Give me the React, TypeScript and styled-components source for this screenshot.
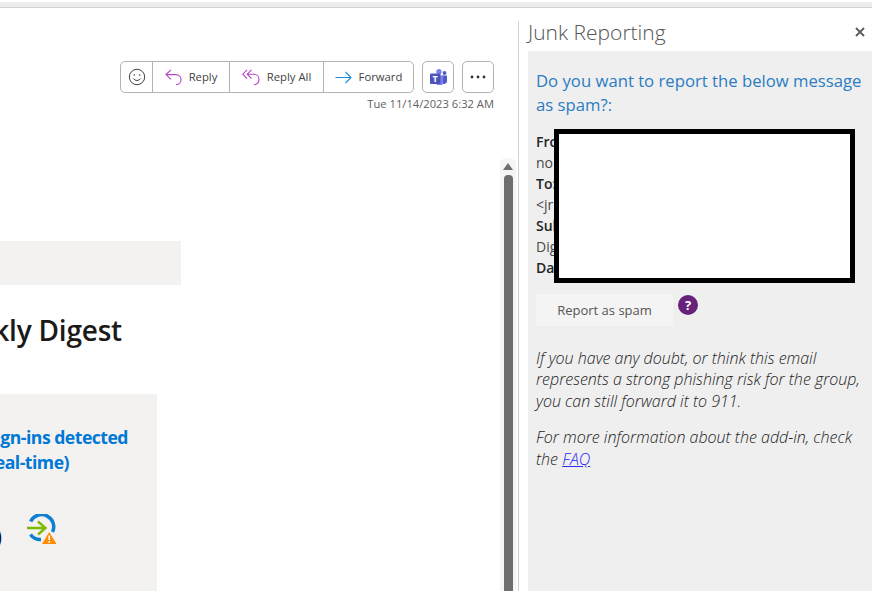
import React from 'react';
import styled, { createGlobalStyle } from 'styled-components';

const GlobalStyle = createGlobalStyle`
  html, body {
    margin: 0;
    padding: 0;
    background: #ffffff;
    font-family: "Open Sans", "Noto Sans", "Liberation Sans", sans-serif;
  }
`;

const Page = styled.div`
  width: 872px;
  height: 591px;
  overflow: hidden;
  display: flex;
  flex-direction: column;
`;

const TopStrip = styled.div`
  height: 5px;
  margin-top: 2px;
  background: #ececec;
  border-bottom: 1px solid #d2d2d2;
  flex: none;
`;

const Workspace = styled.div`
  flex: 1;
  min-height: 0;
  display: flex;
`;

const ReadingArea = styled.div`
  width: 518px;
  flex: none;
  display: flex;
`;

const MessageColumn = styled.div`
  width: 500px;
  flex: none;
  display: flex;
  flex-direction: column;
  overflow: hidden;
`;

const ActionRow = styled.div`
  display: flex;
  justify-content: flex-end;
  gap: 8px;
  padding: 53px 6px 0 0;
`;

const ActionGroup = styled.div`
  display: flex;
  height: 32px;
  box-sizing: border-box;
  border: 1px solid #b3b3b3;
  border-radius: 5px;
`;

const ActionButton = styled.div<{ $width: number }>`
  width: ${p => p.$width}px;
  box-sizing: border-box;
  display: flex;
  align-items: center;
  justify-content: center;
  gap: 7px;
  font-size: 11.3px;
  color: #424242;
  & + & {
    border-left: 1px solid #b3b3b3;
  }
  span {
    padding-bottom: 2px;
  }
`;

const SquareButton = styled.div`
  width: 32px;
  height: 32px;
  box-sizing: border-box;
  border: 1px solid #b3b3b3;
  border-radius: 5px;
  display: flex;
  align-items: center;
  justify-content: center;
`;

const Timestamp = styled.div`
  margin: 3px 6px 0 0;
  text-align: right;
  font-size: 11.2px;
  line-height: 16px;
  color: #616161;
`;

const BannerBand = styled.div`
  width: 181px;
  height: 44px;
  margin-top: 129px;
  background: #f3f2f1;
`;

const DigestTitle = styled.div`
  width: 122px;
  margin-top: 27px;
  display: flex;
  justify-content: flex-end;
  white-space: nowrap;
  font-size: 28px;
  line-height: 36px;
  font-weight: 600;
  letter-spacing: -0.2px;
  color: #1b1a19;
`;

const AlertCard = styled.div`
  width: 157px;
  flex: 1;
  margin-top: 46px;
  padding-top: 31px;
  background: #f3f2f1;
`;

const AlertLink = styled.div<{ $right: number }>`
  width: ${p => p.$right}px;
  display: flex;
  justify-content: flex-end;
  white-space: nowrap;
  font-size: 17.6px;
  line-height: 25px;
  font-weight: 700;
  letter-spacing: -0.5px;
  color: #0078d4;
`;

const AlertStatRow = styled.div`
  display: flex;
  align-items: flex-start;
  width: 57px;
  justify-content: flex-end;
  gap: 25px;
  margin-top: 39px;
  font-size: 24px;
  line-height: 32px;
  font-weight: 600;
  color: #111111;
  svg {
    flex: none;
  }
  span {
    flex: none;
    margin-top: 6px;
  }
`;

const ScrollTrack = styled.div`
  width: 16px;
  margin-top: 150px;
  flex: none;
  display: flex;
  flex-direction: column;
  align-items: center;
  background: #f5f5f5;
  border-radius: 6px 6px 0 0;
`;

const ScrollArrow = styled.div`
  width: 0;
  height: 0;
  margin-top: 5px;
  border-left: 5px solid transparent;
  border-right: 5px solid transparent;
  border-bottom: 7px solid #6e6e6e;
`;

const ScrollThumb = styled.div`
  width: 9px;
  flex: 1;
  margin-top: 5px;
  background: #6e6e6e;
  border-radius: 4px 4px 0 0;
`;

const PaneDivider = styled.div`
  width: 1px;
  margin-top: 13px;
  background: #d2d2d2;
  flex: none;
`;

const Pane = styled.div`
  flex: 1;
  min-width: 0;
  padding-left: 9px;
  display: flex;
  flex-direction: column;
`;

const PaneHeader = styled.div`
  height: 43px;
  flex: none;
  display: flex;
  align-items: flex-end;
  justify-content: space-between;
`;

const PaneTitle = styled.div`
  font-size: 21px;
  line-height: 34px;
  font-weight: 300;
  color: #555555;
  padding-bottom: 2px;
`;

const CloseButton = styled.div`
  width: 24px;
  height: 34px;
  margin-bottom: 2px;
  display: flex;
  align-items: center;
  justify-content: center;
`;

const PaneBody = styled.div`
  flex: 1;
  padding: 18px 8px 0;
  background: #efefef;
`;

const Question = styled.div`
  font-size: 16.7px;
  line-height: 24px;
  color: #2b7cc4;
`;

const MetaBlock = styled.div`
  position: relative;
  margin-top: 14px;
  height: 152px;
  font-size: 14px;
  line-height: 21px;
  color: #4a4a4a;
`;

const MetaLabel = styled.div`
  font-weight: 600;
  color: #252525;
`;

const Redaction = styled.div`
  position: absolute;
  left: 18px;
  top: -2px;
  width: 301px;
  height: 154px;
  box-sizing: border-box;
  background: #ffffff;
  border: 5px solid #000000;
`;

const ReportRow = styled.div`
  display: flex;
  align-items: flex-start;
  gap: 5px;
  margin-top: 11px;
`;

const ReportButton = styled.div`
  width: 137px;
  height: 32px;
  background: #f4f4f4;
  display: flex;
  align-items: center;
  justify-content: center;
  font-size: 13px;
  color: #555555;
`;

const HelpBadge = styled.div`
  width: 20px;
  height: 20px;
  margin-top: 1px;
  border-radius: 50%;
  background: #68217a;
  color: #ffffff;
  font-size: 13px;
  font-weight: 700;
  display: flex;
  align-items: center;
  justify-content: center;
`;

const Note = styled.p`
  margin: 0 0 15px;
  font-size: 16px;
  line-height: 21.4px;
  font-style: italic;
  font-weight: 300;
  color: #222222;
  &:first-of-type {
    margin-top: 22px;
  }
  a {
    color: #2a2af0;
  }
`;

const ReplyIcon = () => (
  <svg width="17" height="17" viewBox="0 0 17 17" fill="none" stroke="#b146c2" strokeWidth="1.1">
    <path d="M6 .8 1 5.6l5 4.8M1 5.6h9.500c3.600 0 5.500 2.400 5.500 5 0 2.800-2 5.200-5 5.200" />
  </svg>
);

const ReplyAllIcon = () => (
  <svg width="18" height="17" viewBox="0 0 18 17" fill="none" stroke="#b146c2" strokeWidth="1.1">
    <path d="M5 .8.8 5.200 5 9.600M9.500.8 5.200 5.200l4.300 4.400M5.200 5.200h6.300c3.600 0 5.500 2.600 5.500 5.200 0 2.900-2 5.400-5 5.400" />
  </svg>
);

const ForwardIcon = () => (
  <svg width="17" height="13" viewBox="0 0 17 13" fill="none" stroke="#1c8ad6" strokeWidth="1.1">
    <path d="M.5 6.500h15.500M10.500 1l5.500 5.500-5.500 5.500" />
  </svg>
);

const SmileIcon = () => (
  <svg width="18" height="18" viewBox="0 0 18 18" fill="none" stroke="#424242" strokeWidth="1">
    <circle cx="9" cy="9" r="7.700" />
    <circle cx="6.300" cy="7" r=".8" fill="#424242" stroke="none" />
    <circle cx="11.700" cy="7" r=".8" fill="#424242" stroke="none" />
    <path d="M5.500 10.800c1.800 2.300 5.200 2.300 7 0" strokeLinecap="round" />
  </svg>
);

const TeamsIcon = () => (
  <svg width="17" height="16" viewBox="0 0 17 16">
    <circle cx="9" cy="2.800" r="2.700" fill="#7b83eb" />
    <circle cx="14.500" cy="4" r="1.900" fill="#5059c9" />
    <path d="M11.500 6.500H17v5a3 3 0 0 1-5.500 2z" fill="#5059c9" />
    <path d="M5 6.500h8v6.500a3.400 3.400 0 0 1-7 .5z" fill="#7b83eb" />
    <rect x="0" y="4.500" width="10.500" height="10.500" rx="1" fill="#4b53bc" />
    <text x="5.200" y="12.700" textAnchor="middle" fontSize="9" fontWeight="700" fill="#ffffff" fontFamily="'Open Sans', sans-serif">T</text>
  </svg>
);

const MoreIcon = () => (
  <svg width="16" height="4" viewBox="0 0 16 4" fill="#333333">
    <circle cx="2" cy="2" r="1.400" />
    <circle cx="8" cy="2" r="1.400" />
    <circle cx="14" cy="2" r="1.400" />
  </svg>
);

const CloseIcon = () => (
  <svg width="10" height="10" viewBox="0 0 10 10" fill="none" stroke="#5a5a5a" strokeWidth="1.800">
    <path d="M1 1l8 8M9 1l-8 8" />
  </svg>
);

const SignInAlertIcon = () => (
  <svg width="30" height="31" viewBox="0 0 30 31" fill="none">
    <path d="M3.600 7.500A12 12 0 1 1 25.500 18" stroke="#0f7fd0" strokeWidth="3.500" />
    <path d="M3.500 20.500A12 12 0 0 0 14 25.500" stroke="#0f7fd0" strokeWidth="3.500" />
    <path d="M0 14h19M11 7.500l7.500 6.500-7.500 6.500" stroke="#7fba00" strokeWidth="2.400" />
    <path d="M15 30 22.200 18 29.500 30z" fill="#ff8c00" />
    <rect x="21.400" y="21.500" width="1.700" height="4.500" fill="#ffffff" />
    <rect x="21.400" y="27" width="1.700" height="1.700" fill="#ffffff" />
  </svg>
);

export default function App() {
  return (
    <Page>
      <GlobalStyle />
      <TopStrip />
      <Workspace>
        <ReadingArea>
          <MessageColumn>
            <ActionRow>
              <ActionGroup>
                <ActionButton $width={31}><SmileIcon /></ActionButton>
                <ActionButton $width={77}><ReplyIcon /><span>Reply</span></ActionButton>
                <ActionButton $width={94}><ReplyAllIcon /><span>Reply All</span></ActionButton>
                <ActionButton $width={90}><ForwardIcon /><span>Forward</span></ActionButton>
              </ActionGroup>
              <SquareButton><TeamsIcon /></SquareButton>
              <SquareButton><MoreIcon /></SquareButton>
            </ActionRow>
            <Timestamp>Tue 11/14/2023 6:32 AM</Timestamp>
            <BannerBand />
            <DigestTitle>Weekly Digest</DigestTitle>
            <AlertCard>
              <AlertLink $right={128}>Unfamiliar sign-ins detected</AlertLink>
              <AlertLink $right={69}>(real-time)</AlertLink>
              <AlertStatRow>
                <span>)</span>
                <SignInAlertIcon />
              </AlertStatRow>
            </AlertCard>
          </MessageColumn>
          <ScrollTrack>
            <ScrollArrow />
            <ScrollThumb />
          </ScrollTrack>
        </ReadingArea>
        <PaneDivider />
        <Pane>
          <PaneHeader>
            <PaneTitle>Junk Reporting</PaneTitle>
            <CloseButton><CloseIcon /></CloseButton>
          </PaneHeader>
          <PaneBody>
            <Question>Do you want to report the below message as spam?:</Question>
            <MetaBlock>
              <MetaLabel>From:</MetaLabel>
              <div>no</div>
              <MetaLabel>To:</MetaLabel>
              <div>&lt;jr</div>
              <MetaLabel>Subject:</MetaLabel>
              <div>Digest</div>
              <MetaLabel>Date:</MetaLabel>
              <Redaction />
            </MetaBlock>
            <ReportRow>
              <ReportButton>Report as spam</ReportButton>
              <HelpBadge>?</HelpBadge>
            </ReportRow>
            <Note>If you have any doubt, or think this email represents a strong phishing risk for the group, you can still forward it to 911.</Note>
            <Note>For more information about the add-in, check the <a href="#faq">FAQ</a></Note>
          </PaneBody>
        </Pane>
      </Workspace>
    </Page>
  );
}
